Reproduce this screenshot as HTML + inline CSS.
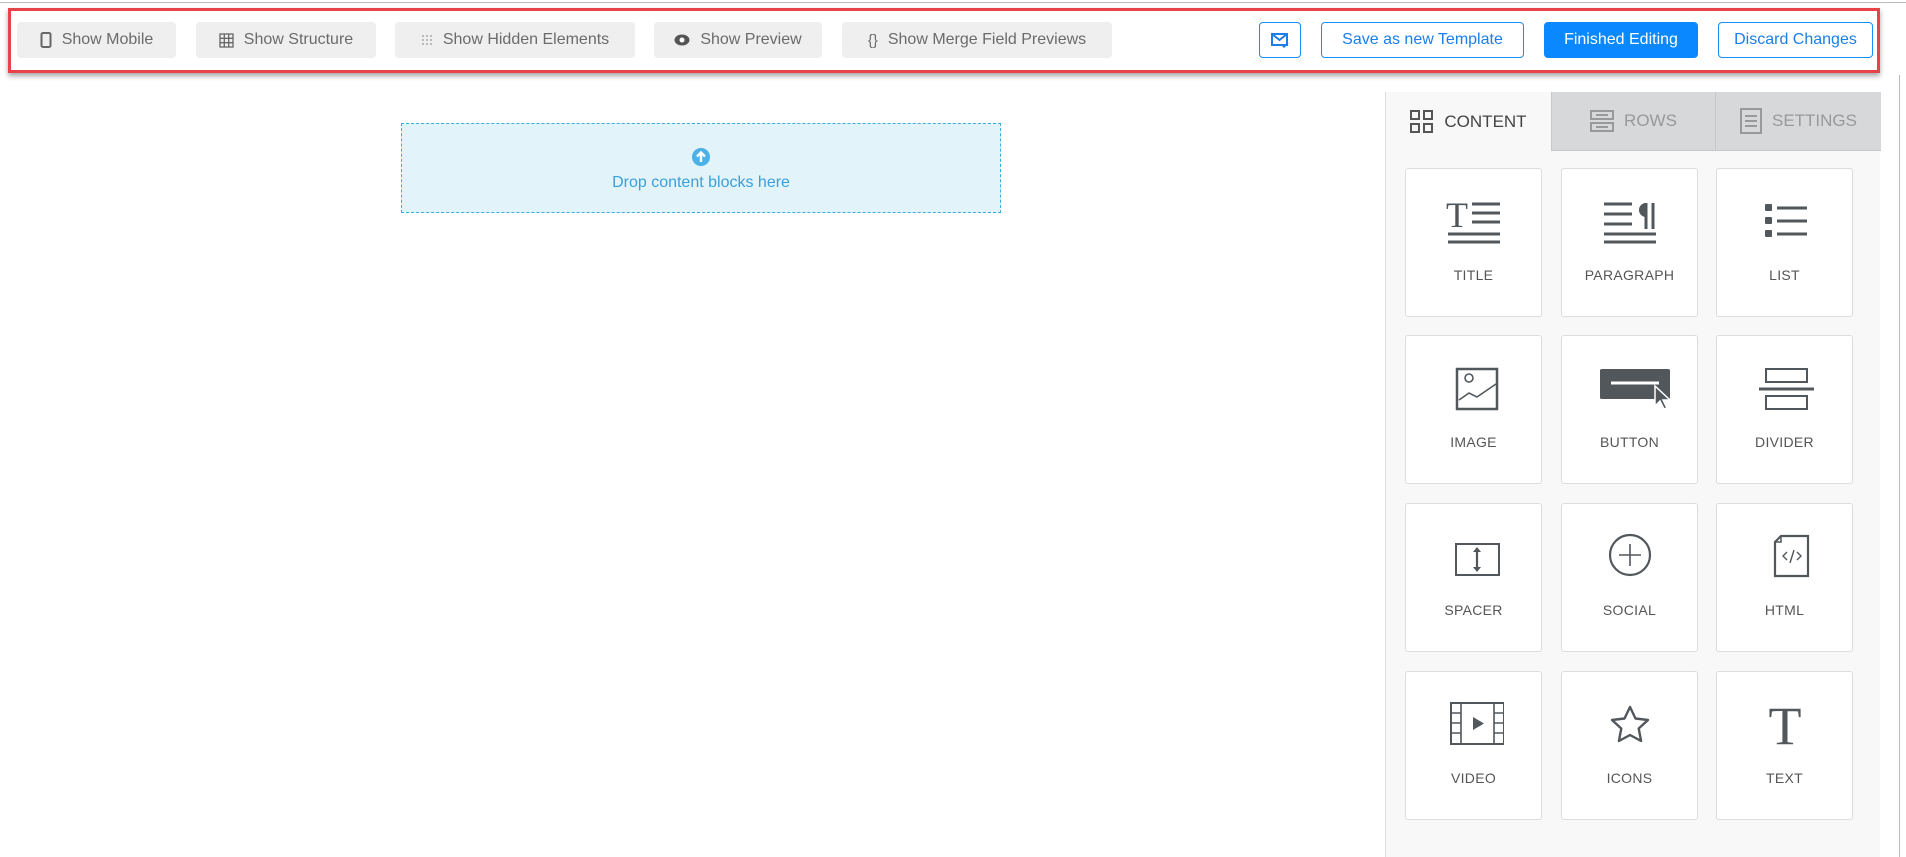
<!DOCTYPE html>
<html><head><meta charset="utf-8"><style>
*{box-sizing:border-box;margin:0;padding:0}
body{width:1906px;height:857px;overflow:hidden;background:#fff;font-family:"Liberation Sans",sans-serif;position:relative}
.tb{position:absolute;left:8px;top:8px;width:1872px;height:65px;border:3px solid #e8434a;box-shadow:0 3px 5px rgba(0,0,0,.35);background:#fff}
.b{position:absolute;top:11px;height:36px;border-radius:4px;background:#efefef;color:#6b6b6b;font-size:16px;display:flex;align-items:center;justify-content:center;gap:10px}
.o{background:#fff;border:1px solid #1a8cff;color:#1a7fe8}
.f{background:#0a88ff;color:#fff}
.sb{position:absolute;left:1385px;top:92px;width:495px;height:765px;background:#f8f8f8;border-left:1px solid #ddd}
.tab{position:absolute;top:0;height:59px;display:flex;align-items:center;justify-content:center;gap:10px;font-size:17px;color:#999;background:#d6d8da;border-bottom:1px solid #c8c8c8}
.card{position:absolute;width:137px;height:149px;background:#fff;border:1px solid #ddd;border-radius:3px}
.card svg{position:absolute;left:38px;top:26px}
.card span{position:absolute;left:0;right:0;top:98px;text-align:center;font-size:14px;color:#555;letter-spacing:.3px}
</style></head><body>
<div style="position:absolute;left:0;right:0;top:2px;height:1px;background:#bbb"></div>
<div style="position:absolute;left:1899px;top:75px;width:1px;height:782px;background:#bbb"></div>
<div class="tb">
<div class="b" style="left:6px;width:159px"><svg width="12" height="16"><rect x="1.5" y="1" width="9" height="14" rx="1.5" fill="none" stroke="#666" stroke-width="2"/></svg>Show Mobile</div>
<div class="b" style="left:185px;width:180px"><svg width="15" height="15" fill="none" stroke="#666" stroke-width="1.3"><rect x="1" y="1" width="13" height="13"/><path d="M5.3 1v13M9.7 1v13M1 5.3h13M1 9.7h13"/></svg>Show Structure</div>
<div class="b" style="left:384px;width:240px"><svg width="12" height="12" fill="#aaa"><circle cx="2" cy="2" r="1"/><circle cx="6" cy="2" r="1"/><circle cx="10" cy="2" r="1"/><circle cx="2" cy="6" r="1"/><circle cx="6" cy="6" r="1"/><circle cx="10" cy="6" r="1"/><circle cx="2" cy="10" r="1"/><circle cx="6" cy="10" r="1"/><circle cx="10" cy="10" r="1"/></svg>Show Hidden Elements</div>
<div class="b" style="left:643px;width:168px"><svg width="16" height="12"><ellipse cx="8" cy="6" rx="7.5" ry="5.5" fill="#555"/><circle cx="8" cy="6" r="2.5" fill="#fff"/></svg>Show Preview</div>
<div class="b" style="left:831px;width:270px"><span style="font-size:15px">{}</span>Show Merge Field Previews</div>
<div class="b o" style="left:1248px;width:42px"><svg width="18" height="16" fill="none" stroke="#1a7fe8" stroke-width="2"><rect x="1" y="2" width="15" height="11"/><path d="M1 2l7.5 6L16 2"/><path d="M11 13l2 2 4-4" stroke-width="1.5"/></svg></div>
<div class="b o" style="left:1310px;width:203px">Save as new Template</div>
<div class="b f" style="left:1533px;width:154px">Finished Editing</div>
<div class="b o" style="left:1707px;width:155px">Discard Changes</div>
</div>
<div style="position:absolute;left:401px;top:123px;width:600px;height:90px;background:#e2f3fa;border:1px dashed #3aaedf"></div>
<svg style="position:absolute;left:691px;top:147px" width="20" height="20"><circle cx="10" cy="10" r="9" fill="#4ab2e8"/><path d="M10 15V6M6 9.5l4-4 4 4" stroke="#fff" stroke-width="2.4" fill="none"/></svg>
<div style="position:absolute;left:401px;top:174px;width:600px;text-align:center;font-size:16px;color:#3aa0db">Drop content blocks here</div>
<div class="sb">
<div class="tab" style="left:0;width:165px;background:#f8f8f8;color:#444;border-bottom:none"><svg width="24" height="24" fill="none" stroke="#555" stroke-width="2"><rect x="1" y="1" width="8" height="8"/><rect x="14" y="1" width="8" height="8"/><rect x="1" y="14" width="8" height="8"/><rect x="14" y="14" width="8" height="8"/></svg>CONTENT</div>
<div class="tab" style="left:165px;width:164px;border-left:1px solid #c8c8c8"><svg width="24" height="24" fill="none" stroke="#999" stroke-width="2"><rect x="1" y="2" width="22" height="8"/><rect x="1" y="14" width="22" height="8"/><path d="M6 6h12M6 18h12"/></svg>ROWS</div>
<div class="tab" style="left:329px;width:166px;border-left:1px solid #c8c8c8"><svg width="22" height="26" fill="none" stroke="#999" stroke-width="2"><rect x="1" y="1" width="20" height="24"/><path d="M5 8h12M5 13h12M5 18h12"/></svg>SETTINGS</div>
</div>
<div class="card" style="left:1405px;top:168px"><svg width="60" height="50"><text x="2" y="32" font-family="Liberation Serif" font-size="36" fill="#52575c">T</text><path d="M28 9h28M28 18h28M28 27h28M4 39h52M4 47h52" stroke="#52575c" stroke-width="3"/></svg><span>TITLE</span></div>
<div class="card" style="left:1561px;top:168px"><svg width="60" height="50"><path d="M4 9h28M4 19h28M4 29h28M4 39h52M4 47h52" stroke="#52575c" stroke-width="3"/><path d="M46 8v26M53 8v26" stroke="#52575c" stroke-width="3"/><path d="M46 8h9M46 8a7 7 0 0 0 0 14z" fill="#52575c"/></svg><span>PARAGRAPH</span></div>
<div class="card" style="left:1716px;top:168px"><svg width="60" height="50"><rect x="10" y="9" width="7" height="7" rx="1" fill="#52575c"/><rect x="10" y="22" width="7" height="7" rx="1" fill="#52575c"/><rect x="10" y="35" width="7" height="7" rx="1" fill="#52575c"/><path d="M22 13h30M22 26h30M22 39h30" stroke="#52575c" stroke-width="3"/></svg><span>LIST</span></div>
<div class="card" style="left:1405px;top:335px"><svg width="60" height="50"><rect x="13" y="7" width="40" height="40" fill="none" stroke="#52575c" stroke-width="2.5"/><circle cx="25" cy="16" r="4" fill="none" stroke="#52575c" stroke-width="1.6"/><path d="M15 38l10-7 8 4 19-13" fill="none" stroke="#52575c" stroke-width="1.6"/></svg><span>IMAGE</span></div>
<div class="card" style="left:1561px;top:335px"><svg width="70" height="50"><rect x="-1" y="7" width="72" height="30" rx="3" fill="#52575c"/><path d="M11 21h48" stroke="#fff" stroke-width="3"/><path d="M55 24v20l5-5 4 8 3-1-4-8h7z" fill="#52575c" stroke="#fff" stroke-width="1.5"/></svg><span>BUTTON</span></div>
<div class="card" style="left:1716px;top:335px"><svg width="60" height="50"><rect x="11" y="7" width="41" height="13" fill="none" stroke="#52575c" stroke-width="2"/><rect x="11" y="34" width="41" height="13" fill="none" stroke="#52575c" stroke-width="2"/><path d="M4 27h55" stroke="#52575c" stroke-width="3"/></svg><span>DIVIDER</span></div>
<div class="card" style="left:1405px;top:503px"><svg width="60" height="50"><rect x="12" y="14" width="43" height="31" fill="none" stroke="#52575c" stroke-width="2"/><path d="M33 19v21" stroke="#52575c" stroke-width="2.2"/><path d="M29 22l4-5 4 5zM29 37l4 5 4-5z" fill="#52575c"/></svg><span>SPACER</span></div>
<div class="card" style="left:1561px;top:503px"><svg width="60" height="50"><circle cx="30" cy="25" r="20" fill="none" stroke="#52575c" stroke-width="2.2"/><path d="M30 14v22M19 25h22" stroke="#52575c" stroke-width="1.6"/></svg><span>SOCIAL</span></div>
<div class="card" style="left:1716px;top:503px"><svg width="60" height="50"><path d="M20 12l6-6h27v40H20z" fill="none" stroke="#52575c" stroke-width="2.2"/><path d="M20 12h6V6" fill="none" stroke="#52575c" stroke-width="1.5"/><path d="M32 22l-4 4 4 4M42 22l4 4-4 4M39 20l-4 13" fill="none" stroke="#52575c" stroke-width="1.4"/></svg><span>HTML</span></div>
<div class="card" style="left:1405px;top:671px"><svg width="60" height="50"><rect x="7" y="5" width="53" height="41" fill="none" stroke="#52575c" stroke-width="2"/><path d="M17 5v41M50 5v41M7 15h10M7 25h10M7 35h10M50 15h10M50 25h10M50 35h10" stroke="#52575c" stroke-width="1.6"/><path d="M29 19v13l11-6.5z" fill="#52575c"/></svg><span>VIDEO</span></div>
<div class="card" style="left:1561px;top:671px"><svg width="60" height="50"><path d="M30 9l5.5 11.5 12.5 1.5-9.3 8.5 2.4 12.5L30 37l-11.1 6 2.4-12.5L12 22l12.5-1.5z" fill="none" stroke="#52575c" stroke-width="2.4" stroke-linejoin="round"/></svg><span>ICONS</span></div>
<div class="card" style="left:1716px;top:671px"><svg width="60" height="50"><text x="30" y="46" text-anchor="middle" font-family="Liberation Serif" font-size="54" fill="#52575c">T</text></svg><span>TEXT</span></div>
</body></html>
